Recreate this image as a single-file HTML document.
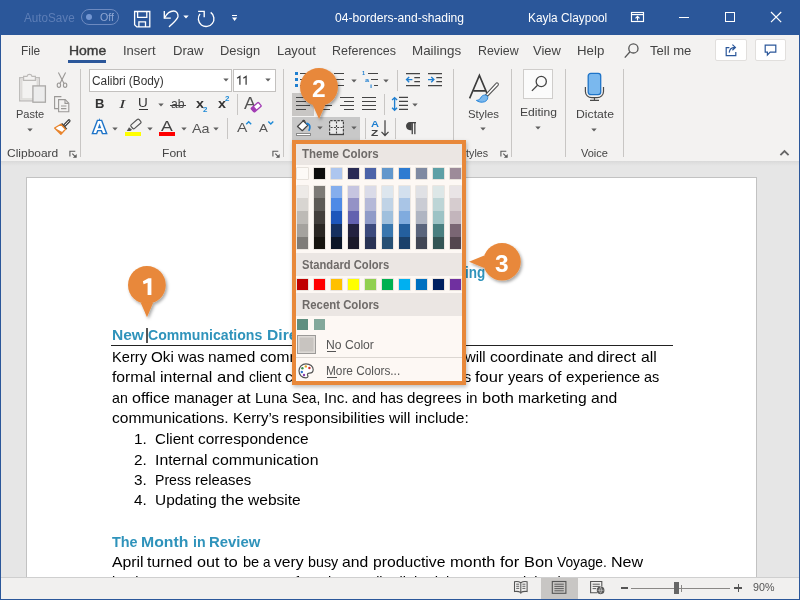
<!DOCTYPE html>
<html><head><meta charset="utf-8"><title>Word</title>
<style>
*{box-sizing:border-box;margin:0;padding:0}
html,body{width:800px;height:600px;overflow:hidden;background:#e6e6e6;font-family:"Liberation Sans",sans-serif;}
.a{position:absolute}
.t{position:absolute;white-space:nowrap;line-height:1;transform-origin:0 0}
</style></head><body>
<div class="a" style="left:0px;top:0px;width:800px;height:35px;background:#2b579a;"></div>
<div class="a" style="left:0px;top:35px;width:800px;height:126px;background:#f3f2f1;"></div>
<div class="a" style="left:0px;top:161px;width:800px;height:5px;background:linear-gradient(#d9d9d9,#e0e0e0 50%,#e6e6e6);"></div>
<div class="a" style="left:26px;top:177px;width:731px;height:410px;background:#fff;border:1px solid #c2c2c2;"></div>
<div class="t" style="left:465.04px;top:265.00px;font-size:16.00px;color:#2f93bb;font-weight:bold;transform:scaleX(0.8436);">ing</div>
<div class="t" style="left:111.70px;top:327.00px;font-size:15.00px;color:#2f93bb;font-weight:bold;transform:scaleX(1.0359);">New</div>
<div class="a" style="left:146.3px;top:327.5px;width:1.3px;height:15.5px;background:#555;"></div>
<div class="t" style="left:148.30px;top:327.00px;font-size:15.00px;color:#2f93bb;font-weight:bold;transform:scaleX(0.9393);white-space:pre;">Communications </div>
<div class="t" style="left:266.50px;top:327.00px;font-size:15.00px;color:#2f93bb;font-weight:bold;transform:scaleX(1.0423);white-space:pre;">Director</div>
<div class="a" style="left:111px;top:344.5px;width:561.5px;height:1.2px;background:#222;"></div>
<div class="t" style="left:111.90px;top:349.00px;font-size:15.00px;color:#000;transform:scaleX(0.9749);white-space:pre;">Kerry </div>
<div class="t" style="left:150.90px;top:349.00px;font-size:15.00px;color:#000;transform:scaleX(1.0125);white-space:pre;">Oki </div>
<div class="t" style="left:177.90px;top:349.00px;font-size:15.00px;color:#000;transform:scaleX(0.9857);white-space:pre;">was </div>
<div class="t" style="left:208.30px;top:349.00px;font-size:15.00px;color:#000;transform:scaleX(1.0313);white-space:pre;">named </div>
<div class="t" style="left:259.90px;top:349.00px;font-size:15.00px;color:#000;transform:scaleX(1.0385);white-space:pre;">communications</div>
<div class="t" style="left:465.10px;top:349.00px;font-size:15.00px;color:#000;transform:scaleX(0.9921);white-space:pre;">will </div>
<div class="t" style="left:489.90px;top:349.00px;font-size:15.00px;color:#000;transform:scaleX(1.0483);white-space:pre;">coordinate </div>
<div class="t" style="left:567.70px;top:349.00px;font-size:15.00px;color:#000;transform:scaleX(1.0173);white-space:pre;">and </div>
<div class="t" style="left:597.40px;top:349.00px;font-size:15.00px;color:#000;transform:scaleX(1.0576);white-space:pre;">direct </div>
<div class="t" style="left:640.60px;top:349.00px;font-size:15.00px;color:#000;transform:scaleX(1.0495);white-space:pre;">all</div>
<div class="t" style="left:111.90px;top:369.00px;font-size:15.00px;color:#000;transform:scaleX(1.0471);white-space:pre;">formal </div>
<div class="t" style="left:159.90px;top:369.00px;font-size:15.00px;color:#000;transform:scaleX(1.0625);white-space:pre;">internal </div>
<div class="t" style="left:216.60px;top:369.00px;font-size:15.00px;color:#000;transform:scaleX(1.1132);white-space:pre;">and </div>
<div class="t" style="left:249.10px;top:369.00px;font-size:15.00px;color:#000;transform:scaleX(0.9238);white-space:pre;">client </div>
<div class="t" style="left:285.30px;top:369.00px;font-size:15.00px;color:#000;transform:scaleX(1.0539);white-space:pre;">communications. </div>
<div class="t" style="left:408.30px;top:369.00px;font-size:15.00px;color:#000;transform:scaleX(1.0366);white-space:pre;">Kerry</div>
<div class="t" style="left:447.80px;top:369.00px;font-size:15.00px;color:#000;transform:scaleX(0.9629);white-space:pre;">has </div>
<div class="t" style="left:475.10px;top:369.00px;font-size:15.00px;color:#000;transform:scaleX(1.0995);white-space:pre;">four </div>
<div class="t" style="left:508.10px;top:369.00px;font-size:15.00px;color:#000;transform:scaleX(0.9695);white-space:pre;">years </div>
<div class="t" style="left:547.70px;top:369.00px;font-size:15.00px;color:#000;transform:scaleX(1.0673);white-space:pre;">of </div>
<div class="t" style="left:565.50px;top:369.00px;font-size:15.00px;color:#000;transform:scaleX(1.0110);white-space:pre;">experience </div>
<div class="t" style="left:643.90px;top:369.00px;font-size:15.00px;color:#000;transform:scaleX(0.9626);white-space:pre;">as</div>
<div class="t" style="left:111.90px;top:390.00px;font-size:15.00px;color:#000;transform:scaleX(0.9447);white-space:pre;">an </div>
<div class="t" style="left:131.60px;top:390.00px;font-size:15.00px;color:#000;transform:scaleX(1.0692);white-space:pre;">office </div>
<div class="t" style="left:174.10px;top:390.00px;font-size:15.00px;color:#000;transform:scaleX(0.9942);white-space:pre;">manager </div>
<div class="t" style="left:237.10px;top:390.00px;font-size:15.00px;color:#000;transform:scaleX(1.0913);white-space:pre;">at </div>
<div class="t" style="left:255.30px;top:390.00px;font-size:15.00px;color:#000;transform:scaleX(0.9671);white-space:pre;">Luna </div>
<div class="t" style="left:291.60px;top:390.00px;font-size:15.00px;color:#000;transform:scaleX(0.9136);white-space:pre;">Sea, </div>
<div class="t" style="left:323.60px;top:390.00px;font-size:15.00px;color:#000;transform:scaleX(1.0125);white-space:pre;">Inc. </div>
<div class="t" style="left:352.30px;top:390.00px;font-size:15.00px;color:#000;transform:scaleX(0.9591);white-space:pre;">and </div>
<div class="t" style="left:380.30px;top:390.00px;font-size:15.00px;color:#000;transform:scaleX(0.9523);white-space:pre;">has </div>
<div class="t" style="left:407.30px;top:390.00px;font-size:15.00px;color:#000;transform:scaleX(1.0073);white-space:pre;">degrees </div>
<div class="t" style="left:466.10px;top:390.00px;font-size:15.00px;color:#000;transform:scaleX(0.9784);white-space:pre;">in </div>
<div class="t" style="left:481.60px;top:390.00px;font-size:15.00px;color:#000;transform:scaleX(1.0941);white-space:pre;">both </div>
<div class="t" style="left:518.10px;top:390.00px;font-size:15.00px;color:#000;transform:scaleX(1.0425);white-space:pre;">marketing </div>
<div class="t" style="left:591.10px;top:390.00px;font-size:15.00px;color:#000;transform:scaleX(1.0489);white-space:pre;">and</div>
<div class="t" style="left:111.90px;top:410.00px;font-size:15.00px;color:#000;transform:scaleX(1.0367);white-space:pre;">communications. </div>
<div class="t" style="left:232.90px;top:410.00px;font-size:15.00px;color:#000;transform:scaleX(0.9888);white-space:pre;">Kerry’s </div>
<div class="t" style="left:282.90px;top:410.00px;font-size:15.00px;color:#000;transform:scaleX(1.0356);white-space:pre;">responsibilities </div>
<div class="t" style="left:389.10px;top:410.00px;font-size:15.00px;color:#000;transform:scaleX(1.0321);white-space:pre;">will </div>
<div class="t" style="left:414.90px;top:410.00px;font-size:15.00px;color:#000;transform:scaleX(1.0396);white-space:pre;">include:</div>
<div class="t" style="left:133.50px;top:431.00px;font-size:15.00px;color:#000;transform:scaleX(1.0192);">1.</div>
<div class="t" style="left:154.60px;top:431.00px;font-size:15.00px;color:#000;transform:scaleX(1.0090);white-space:pre;">Client </div>
<div class="t" style="left:197.50px;top:431.00px;font-size:15.00px;color:#000;transform:scaleX(1.0286);white-space:pre;">correspondence</div>
<div class="t" style="left:133.50px;top:452.00px;font-size:15.00px;color:#000;transform:scaleX(1.0192);">2.</div>
<div class="t" style="left:154.60px;top:452.00px;font-size:15.00px;color:#000;transform:scaleX(1.0517);white-space:pre;">Internal </div>
<div class="t" style="left:211.60px;top:452.00px;font-size:15.00px;color:#000;transform:scaleX(1.0552);white-space:pre;">communication</div>
<div class="t" style="left:133.50px;top:472.00px;font-size:15.00px;color:#000;transform:scaleX(1.0192);">3.</div>
<div class="t" style="left:154.60px;top:472.00px;font-size:15.00px;color:#000;transform:scaleX(0.9386);white-space:pre;">Press </div>
<div class="t" style="left:194.50px;top:472.00px;font-size:15.00px;color:#000;transform:scaleX(0.9886);white-space:pre;">releases</div>
<div class="t" style="left:133.50px;top:492.00px;font-size:15.00px;color:#000;transform:scaleX(1.0192);">4.</div>
<div class="t" style="left:154.60px;top:492.00px;font-size:15.00px;color:#000;transform:scaleX(1.0278);white-space:pre;">Updating </div>
<div class="t" style="left:220.60px;top:492.00px;font-size:15.00px;color:#000;transform:scaleX(1.1031);white-space:pre;">the </div>
<div class="t" style="left:248.20px;top:492.00px;font-size:15.00px;color:#000;transform:scaleX(1.0372);white-space:pre;">website</div>
<div class="t" style="left:111.50px;top:534.00px;font-size:15.00px;color:#2f93bb;font-weight:bold;transform:scaleX(0.9599);white-space:pre;">The </div>
<div class="t" style="left:141.10px;top:534.00px;font-size:15.00px;color:#2f93bb;font-weight:bold;transform:scaleX(1.0540);white-space:pre;">Month </div>
<div class="t" style="left:192.90px;top:534.00px;font-size:15.00px;color:#2f93bb;font-weight:bold;transform:scaleX(0.9430);white-space:pre;">in </div>
<div class="t" style="left:209.40px;top:534.00px;font-size:15.00px;color:#2f93bb;font-weight:bold;transform:scaleX(0.9933);white-space:pre;">Review</div>
<div class="t" style="left:111.50px;top:554.00px;font-size:15.00px;color:#000;transform:scaleX(1.0505);white-space:pre;">April </div>
<div class="t" style="left:147.40px;top:554.00px;font-size:15.00px;color:#000;transform:scaleX(1.0643);white-space:pre;">turned </div>
<div class="t" style="left:197.10px;top:554.00px;font-size:15.00px;color:#000;transform:scaleX(1.0792);white-space:pre;">out </div>
<div class="t" style="left:224.10px;top:554.00px;font-size:15.00px;color:#000;transform:scaleX(1.1093);white-space:pre;">to </div>
<div class="t" style="left:242.60px;top:554.00px;font-size:15.00px;color:#000;transform:scaleX(0.9735);white-space:pre;">be </div>
<div class="t" style="left:262.90px;top:554.00px;font-size:15.00px;color:#000;transform:scaleX(0.8953);white-space:pre;">a </div>
<div class="t" style="left:274.10px;top:554.00px;font-size:15.00px;color:#000;transform:scaleX(1.0460);white-space:pre;">very </div>
<div class="t" style="left:308.10px;top:554.00px;font-size:15.00px;color:#000;transform:scaleX(0.9539);white-space:pre;">busy </div>
<div class="t" style="left:342.30px;top:554.00px;font-size:15.00px;color:#000;transform:scaleX(1.0481);white-space:pre;">and </div>
<div class="t" style="left:372.90px;top:554.00px;font-size:15.00px;color:#000;transform:scaleX(1.0467);white-space:pre;">productive </div>
<div class="t" style="left:449.70px;top:554.00px;font-size:15.00px;color:#000;transform:scaleX(1.0882);white-space:pre;">month </div>
<div class="t" style="left:499.60px;top:554.00px;font-size:15.00px;color:#000;transform:scaleX(1.1074);white-space:pre;">for </div>
<div class="t" style="left:523.60px;top:554.00px;font-size:15.00px;color:#000;transform:scaleX(1.0921);white-space:pre;">Bon </div>
<div class="t" style="left:557.30px;top:554.00px;font-size:15.00px;color:#000;transform:scaleX(0.9198);white-space:pre;">Voyage. </div>
<div class="t" style="left:611.00px;top:554.00px;font-size:15.00px;color:#000;transform:scaleX(1.0714);white-space:pre;">New</div>
<div class="t" style="left:111.50px;top:574.00px;font-size:15.00px;color:#000;transform:scaleX(0.9630);">business was up 34 percent from last April. Flight delays were minimal—Bon</div>
<div class="a" style="left:0px;top:576.6px;width:800px;height:23.4px;background:#f1f0ef;border-top:1px solid #cfcfcf;"></div>
<div class="a" style="left:0px;top:598.7px;width:800px;height:1.3px;background:#2b579a;"></div>
<svg class="a" style="left:513px;top:580px;" width="16" height="15" viewBox="0 0 16 15"><g fill="none" stroke="#555" stroke-width="1.050"><path d="M7.800 2.700C6 1.500 3.600 1.300 1.500 1.700v9.900c2.100-.4 4.500-.2 6.300 1c1.800-1.200 4.200-1.400 6.300-1V1.700c-2.100-.4-4.500-.2-6.300 1zM7.800 2.700v11"/><path d="M3.200 4.200h3M3.200 6.300h3M3.200 8.400h3M9.400 4.200h3M9.400 6.300h3M9.400 8.400h3" stroke-width=".9"/></g></svg>
<div class="a" style="left:540.5px;top:577.6px;width:37.5px;height:21.1px;background:#c8c6c4;"></div>
<svg class="a" style="left:551px;top:580px;" width="17" height="15" viewBox="0 0 17 15"><g fill="none" stroke="#555" stroke-width="1.100"><rect x="1.300" y="1.500" width="13.600" height="11.800"/><path d="M3.400 4.200h9.400M3.400 6.400h9.400M3.400 8.600h9.400M3.400 10.800h9.400" stroke-width=".95"/></g></svg>
<svg class="a" style="left:589px;top:580px;" width="17" height="15" viewBox="0 0 17 15"><g fill="none" stroke="#555" stroke-width="1.100"><path d="M8 12.700H1.600V1.500h11.200v5"/><path d="M3.600 4.200h7.200M3.600 6.400h7.200M3.600 8.600h3.600" stroke-width=".95"/><circle cx="11.600" cy="10.300" r="3.300" fill="#5a5a5a"/><path d="M8.600 10.300h6M11.600 7.300c-1.300 1.700-1.300 4.300 0 6c1.300-1.700 1.300-4.300 0-6" stroke="#d8d8d8" stroke-width=".6"/></g></svg>
<div class="a" style="left:620.5px;top:587.4px;width:7px;height:1.3px;background:#555;"></div>
<div class="a" style="left:631px;top:587.6px;width:99px;height:1px;background:#8a8886;"></div>
<div class="a" style="left:681.2px;top:584.6px;width:1px;height:7px;background:#8a8886;"></div>
<div class="a" style="left:674.4px;top:581.6px;width:4.6px;height:12px;background:#666;"></div>
<div class="a" style="left:734.4px;top:587.4px;width:8px;height:1.3px;background:#555;"></div>
<div class="a" style="left:737.8px;top:584px;width:1.3px;height:8px;background:#555;"></div>
<div class="t" style="left:753.36px;top:582.00px;font-size:10.60px;color:#555;transform:scaleX(1.0112);">90%</div>
<div class="a" style="left:0px;top:35px;width:1.1px;height:565px;background:#2b579a;"></div>
<div class="a" style="left:798.8px;top:35px;width:1.2px;height:565px;background:#2b579a;"></div>
<div class="t" style="left:24.05px;top:12.00px;font-size:12.50px;color:#5d7eb7;transform:scaleX(0.9339);">AutoSave</div>
<div class="a" style="left:80.8px;top:9.1px;width:38px;height:15.8px;background:transparent;border:1.100px solid #6d8ac0;border-radius:8px;"></div>
<div class="a" style="left:85.5px;top:13.7px;width:6.6px;height:6.6px;background:#7396d2;border-radius:3.300px;"></div>
<div class="t" style="left:99.57px;top:12.00px;font-size:10.50px;color:#8ea6d2;transform:scaleX(1.0169);">Off</div>
<svg class="a" style="left:133px;top:10px;" width="19" height="19" viewBox="0 0 19 19"><g fill="none" stroke="#fff" stroke-width="1.3"><path d="M1.600 1.500h15.200v15.400H3.800l-2.200-2.200z"/><path d="M4.600 1.500v5.800h9.200V1.500"/><path d="M5.900 16.900v-5h6.600v5"/></g></svg>
<svg class="a" style="left:160px;top:6px;" width="22" height="24" viewBox="0 0 22 24"><g fill="none" stroke="#fff" stroke-width="1.35"><path d="M4.300 5v7.100h6.500"/><path d="M4.700 11.700C6.600 8 10 5 13.600 5c2.900 0 4.600 2.500 4.400 5.400c-.4 3.100-4 5.600-8.600 10.100" stroke-linecap="round"/></g></svg>
<svg class="a" style="left:181.5px;top:14.3px;" width="8" height="6" viewBox="0 0 8 6"><path d="M1.300 1.500h5.400L4 4.600z" fill="#fff"/></svg>
<svg class="a" style="left:195px;top:6px;" width="22" height="24" viewBox="0 0 22 24"><g fill="none" stroke="#fff" stroke-width="1.35"><path d="M3.100 5.300h6.100v6"/><path d="M15.700 6.400A7.800 7.800 0 1 1 5 7.900"/></g></svg>
<div class="a" style="left:232px;top:15px;width:5.2px;height:1.2px;background:#fff;"></div>
<svg class="a" style="left:231px;top:17px;" width="8" height="5" viewBox="0 0 8 5"><path d="M1 .5h5.200L3.600 3.900z" fill="#fff"/></svg>
<div class="t" style="left:334.85px;top:12.00px;font-size:12.50px;color:#fff;transform:scaleX(0.9671);">04-borders-and-shading</div>
<div class="t" style="left:527.65px;top:12.00px;font-size:12.50px;color:#fff;transform:scaleX(0.9502);">Kayla Claypool</div>
<svg class="a" style="left:630px;top:11px;" width="15" height="12" viewBox="0 0 15 12"><g fill="none" stroke="#fff" stroke-width="1.150"><rect x="1.500" y="1.500" width="12" height="9"/><path d="M1.500 3.600h12"/><path d="M7.500 9.400V5.600M5.500 7.300l2-1.900l2 1.900"/></g></svg>
<div class="a" style="left:679px;top:16.5px;width:10.2px;height:1.1px;background:#fff;"></div>
<div class="a" style="left:725.1px;top:12.3px;width:10.3px;height:9.9px;background:transparent;border:1.200px solid #fff;"></div>
<svg class="a" style="left:770px;top:11.4px;" width="12" height="12" viewBox="0 0 12 12"><path d="M1 1l10.200 10.200M11.200 1L1 11.200" stroke="#fff" stroke-width="1.200" fill="none"/></svg>
<div class="t" style="left:21.02px;top:44.00px;font-size:13.00px;color:#444;transform:scaleX(0.9151);">File</div>
<div class="t" style="left:69.02px;top:44.00px;font-size:13.00px;color:#3b3b3b;transform:scaleX(1.0748);-webkit-text-stroke:0.38px #3b3b3b;">Home</div>
<div class="a" style="left:68px;top:59.9px;width:38px;height:2.8px;background:#2b579a;"></div>
<div class="t" style="left:122.82px;top:44.00px;font-size:13.00px;color:#444;transform:scaleX(1.0018);">Insert</div>
<div class="t" style="left:172.82px;top:44.00px;font-size:13.00px;color:#444;transform:scaleX(1.0077);">Draw</div>
<div class="t" style="left:219.82px;top:44.00px;font-size:13.00px;color:#444;transform:scaleX(0.9927);">Design</div>
<div class="t" style="left:276.62px;top:44.00px;font-size:13.00px;color:#444;transform:scaleX(0.9933);">Layout</div>
<div class="t" style="left:331.82px;top:44.00px;font-size:13.00px;color:#444;transform:scaleX(0.9623);">References</div>
<div class="t" style="left:411.82px;top:44.00px;font-size:13.00px;color:#444;transform:scaleX(1.0312);">Mailings</div>
<div class="t" style="left:477.82px;top:44.00px;font-size:13.00px;color:#444;transform:scaleX(0.9518);">Review</div>
<div class="t" style="left:533.22px;top:44.00px;font-size:13.00px;color:#444;transform:scaleX(0.9938);">View</div>
<div class="t" style="left:576.62px;top:44.00px;font-size:13.00px;color:#444;transform:scaleX(1.0200);">Help</div>
<svg class="a" style="left:622px;top:41px;" width="18" height="18" viewBox="0 0 18 18"><g fill="none" stroke="#555" stroke-width="1.3"><circle cx="11.4" cy="7.4" r="4.6"/><path d="M8 10.800L2.800 16.600"/></g></svg>
<div class="t" style="left:650.12px;top:44.00px;font-size:13.00px;color:#444;transform:scaleX(1.0047);">Tell me</div>
<div class="a" style="left:715.4px;top:38.8px;width:31.2px;height:22.6px;background:#fff;border:1px solid #e1dfdd;border-radius:2px;"></div>
<div class="a" style="left:755.2px;top:38.8px;width:31.2px;height:22.6px;background:#fff;border:1px solid #e1dfdd;border-radius:2px;"></div>
<svg class="a" style="left:722.6px;top:42.3px;" width="17" height="16" viewBox="0 0 17 16"><g fill="none" stroke="#2b579a" stroke-width="1.2"><path d="M6.4 5.6H3.2v8h9.6v-3.6"/><path d="M6.2 10.6c.4-3.2 2.4-5 5.4-5.200M9.4 2.600l3 2.800l-3 2.800"/></g></svg>
<svg class="a" style="left:762.3px;top:42.3px;" width="17" height="16" viewBox="0 0 17 16"><path d="M3.200 3.200h10.600v7H8.200l-2.800 2.800v-2.800H3.200z" fill="none" stroke="#2b579a" stroke-width="1.2"/></svg>
<svg class="a" style="left:17px;top:70px;" width="32" height="36" viewBox="0 0 32 36"><g fill="none"><rect x="2.7" y="7.7" width="19.6" height="23.2" stroke="#bcbab8" stroke-width="1.3" fill="#f3f2f1"/><rect x="4.6" y="9.6" width="15.8" height="19.4" stroke="#dddbd9" stroke-width="1.6"/><path d="M6.6 10.300V6.300h3.400a2.600 2.600 0 0 1 5 0h3.400v4z" fill="#f3f2f1" stroke="#bcbab8" stroke-width="1.2"/><rect x="15.9" y="15.9" width="12.500" height="16.300" fill="#ececec" stroke="#aaa8a6" stroke-width="1.3"/></g></svg>
<div class="t" style="left:15.90px;top:108.00px;font-size:11.60px;color:#444;transform:scaleX(0.9522);">Paste</div>
<svg class="a" style="left:25.5px;top:126.5px;" width="8" height="6" viewBox="0 0 8 6"><path d="M1.3 1.5h5.4L4 4.5z" fill="#606060"/></svg>
<svg class="a" style="left:55px;top:71px;" width="14" height="18" viewBox="0 0 14 18"><g fill="none" stroke="#9a9896" stroke-width="1.1"><path d="M3.4 1.4l5.6 11"/><path d="M10.6 1.4L5 12.4"/><ellipse cx="3.9" cy="14.2" rx="1.7" ry="2.2"/><ellipse cx="10.1" cy="14.2" rx="1.7" ry="2.2"/></g></svg>
<svg class="a" style="left:53px;top:95px;" width="18" height="18" viewBox="0 0 18 18"><g fill="none" stroke="#9a9896" stroke-width="1.1"><path d="M5 13.6H1.6V1.6h6.8"/><path d="M5.6 4.6h6.6l3.6 3.6v8.6H5.6z" fill="#f3f2f1"/><path d="M12 4.8v3.6h3.6"/><path d="M8 11h5.4M8 13.6h5.4"/></g></svg>
<svg class="a" style="left:53px;top:118px;" width="19" height="18" viewBox="0 0 19 18"><g stroke-linejoin="round"><path d="M11.6 7.4L16 2.800" stroke="#444" stroke-width="3.200" stroke-linecap="round" fill="none"/><path d="M11.800 7.200L15.800 3" stroke="#f3f2f1" stroke-width="1" stroke-linecap="round" fill="none"/><path d="M8.4 5.600l5 5.800" stroke="#444" stroke-width="2.200" fill="none"/><path d="M7.900 6.200L1.600 10l6.300 6.200l4.600-5z" fill="#fff" stroke="#e8842c" stroke-width="1.3"/><path d="M1.600 10l6.300 6.200l1.800-2z" fill="#e8842c"/></g></svg>
<div class="t" style="left:6.85px;top:148.00px;font-size:10.80px;color:#444;transform:scaleX(1.1091);">Clipboard</div>
<svg class="a" style="left:69px;top:150px;" width="9" height="9" viewBox="0 0 9 9"><g fill="none" stroke="#5a5a5a" stroke-width="1.1"><path d="M0.900 6.400V1.200H6.300"/><path d="M3.300 3.600l3.200 3.200"/><path d="M7.700 3.900v3.900H3.800z" fill="#5a5a5a" stroke="none"/></g></svg>
<div class="a" style="left:80px;top:69.3px;width:1px;height:87.7px;background:#c8c6c4;"></div>
<div class="a" style="left:88.9px;top:69.2px;width:143.6px;height:22.4px;background:#fff;border:1.300px solid #c3c1bf;"></div>
<div class="a" style="left:232.9px;top:69.2px;width:43px;height:22.4px;background:#fff;border:1.300px solid #c3c1bf;"></div>
<div class="t" style="left:92.25px;top:75.00px;font-size:12.50px;color:#333;transform:scaleX(0.9473);">Calibri (Body)</div>
<svg class="a" style="left:221.5px;top:77.4px;" width="8" height="6" viewBox="0 0 8 6"><path d="M1.3 1.5h5.4L4 4.5z" fill="#606060"/></svg>
<svg class="a" style="left:235px;top:75px;" width="14" height="11" viewBox="0 0 14 11"><g fill="none" stroke="#3a3a3a" stroke-width="1.250"><path d="M2.100 3.300L4.900 1.500V9.700"/><path d="M8.300 3.300l2.800-1.800V9.700"/></g></svg>
<svg class="a" style="left:264.4px;top:77.4px;" width="8" height="6" viewBox="0 0 8 6"><path d="M1.3 1.5h5.4L4 4.5z" fill="#606060"/></svg>
<div class="t" style="left:95.41px;top:97.00px;font-size:13.10px;color:#333;font-weight:bold;transform:scaleX(0.9914);">B</div>
<div class="t" style="left:118.80px;top:97.00px;font-size:13.40px;color:#333;font-style:italic;font-family:'Liberation Serif',serif;transform:scaleX(1.4355);">I</div>
<div class="t" style="left:138.44px;top:97.00px;font-size:12.60px;color:#333;transform:scaleX(1.0697);">U</div>
<div class="a" style="left:139.1px;top:108.7px;width:9px;height:1.2px;background:#333;"></div>
<svg class="a" style="left:156.5px;top:101.5px;" width="8" height="6" viewBox="0 0 8 6"><path d="M1.3 1.5h5.4L4 4.5z" fill="#606060"/></svg>
<div class="t" style="left:171.23px;top:98.00px;font-size:12.80px;color:#444;transform:scaleX(0.9518);">ab</div>
<div class="a" style="left:170px;top:104.5px;width:16.2px;height:1px;background:#444;"></div>
<div class="t" style="left:195.61px;top:97.00px;font-size:13.20px;color:#333;font-weight:bold;transform:scaleX(1.0881);">x</div>
<div class="t" style="left:203.28px;top:106.00px;font-size:7.00px;color:#1e8ad6;font-weight:bold;transform:scaleX(1.1379);">2</div>
<div class="t" style="left:217.71px;top:97.00px;font-size:13.20px;color:#333;font-weight:bold;transform:scaleX(1.0881);">x</div>
<div class="t" style="left:225.38px;top:95.00px;font-size:7.00px;color:#1e8ad6;font-weight:bold;transform:scaleX(1.1379);">2</div>
<div class="a" style="left:237.2px;top:94px;width:1px;height:20.8px;background:#c8c6c4;"></div>
<div class="t" style="left:243.59px;top:96.00px;font-size:16.90px;color:#555;transform:scaleX(1.0753);">A</div>
<svg class="a" style="left:249px;top:100px;" width="14" height="14" viewBox="0 0 14 14"><g transform="rotate(-41 7.2 7.2)"><rect x="2.4" y="4.7" width="9.6" height="5" rx=".8" fill="#fff" stroke="#a23cb4" stroke-width="1.3"/><rect x="2.4" y="4.7" width="3.6" height="5" fill="#a23cb4"/></g></svg>
<div class="t" style="left:92.80px;top:120.00px;font-size:16.60px;color:#fff;font-weight:bold;transform:scaleX(1.0923);-webkit-text-stroke:2.7px #1e74c8;paint-order:stroke fill;">A</div>
<svg class="a" style="left:110.6px;top:125.5px;" width="8" height="6" viewBox="0 0 8 6"><path d="M1.3 1.5h5.4L4 4.5z" fill="#606060"/></svg>
<svg class="a" style="left:124px;top:118px;" width="19" height="15" viewBox="0 0 19 15"><g><rect x="-4.6" y="-2.5" width="10.6" height="5" rx="1.4" transform="translate(11.4 6.4) rotate(-41)" fill="#f3f2f1" stroke="#555" stroke-width="1.15"/><path d="M2.8 13l2.2-3.8l3 2.6l-1.6 1.2z" fill="#555"/></g></svg>
<div class="a" style="left:125px;top:132px;width:16px;height:4px;background:#ffff00;"></div>
<svg class="a" style="left:145.5px;top:125.5px;" width="8" height="6" viewBox="0 0 8 6"><path d="M1.3 1.5h5.4L4 4.5z" fill="#606060"/></svg>
<div class="t" style="left:161.24px;top:119.00px;font-size:14.30px;color:#444;transform:scaleX(1.2358);">A</div>
<div class="a" style="left:159.1px;top:132px;width:16px;height:4px;background:#ff0000;"></div>
<svg class="a" style="left:179.5px;top:125.5px;" width="8" height="6" viewBox="0 0 8 6"><path d="M1.3 1.5h5.4L4 4.5z" fill="#606060"/></svg>
<div class="t" style="left:192.21px;top:122.00px;font-size:13.20px;color:#555;transform:scaleX(1.0893);">Aa</div>
<svg class="a" style="left:211.6px;top:125.5px;" width="8" height="6" viewBox="0 0 8 6"><path d="M1.3 1.5h5.4L4 4.5z" fill="#606060"/></svg>
<div class="a" style="left:227.2px;top:118.2px;width:1px;height:20.4px;background:#c8c6c4;"></div>
<div class="t" style="left:237.21px;top:121.00px;font-size:13.10px;color:#555;transform:scaleX(1.1878);">A</div>
<svg class="a" style="left:245px;top:119.6px;" width="8" height="6" viewBox="0 0 8 6"><path d="M1.2 4.2L3.7 1.7L6.2 4.2" fill="none" stroke="#1e8ad6" stroke-width="1.4"/></svg>
<div class="t" style="left:259.14px;top:123.00px;font-size:11.00px;color:#555;transform:scaleX(1.2117);">A</div>
<svg class="a" style="left:266.7px;top:120px;" width="8" height="6" viewBox="0 0 8 6"><path d="M1.3 1.5L3.8 4L6.3 1.5" fill="none" stroke="#1e8ad6" stroke-width="1.4"/></svg>
<div class="t" style="left:162.15px;top:148.00px;font-size:10.80px;color:#444;transform:scaleX(1.1185);">Font</div>
<svg class="a" style="left:272px;top:150px;" width="9" height="9" viewBox="0 0 9 9"><g fill="none" stroke="#5a5a5a" stroke-width="1.1"><path d="M0.900 6.400V1.200H6.300"/><path d="M3.300 3.600l3.200 3.200"/><path d="M7.700 3.900v3.900H3.800z" fill="#5a5a5a" stroke="none"/></g></svg>
<div class="a" style="left:283.2px;top:69.3px;width:1px;height:87.7px;background:#c8c6c4;"></div>
<div class="a" style="left:295px;top:72.1px;width:2.9px;height:2.8px;background:#1f7fd0;"></div>
<div class="a" style="left:299.8px;top:72.9px;width:12px;height:1.25px;background:#444;"></div>
<div class="a" style="left:295px;top:78.15px;width:2.9px;height:2.8px;background:#1f7fd0;"></div>
<div class="a" style="left:299.8px;top:78.95px;width:12px;height:1.25px;background:#444;"></div>
<div class="a" style="left:295px;top:84.2px;width:2.9px;height:2.8px;background:#1f7fd0;"></div>
<div class="a" style="left:299.8px;top:85px;width:12px;height:1.25px;background:#444;"></div>
<svg class="a" style="left:315px;top:77.5px;" width="8" height="6" viewBox="0 0 8 6"><path d="M1.3 1.5h5.4L4 4.5z" fill="#606060"/></svg>
<div class="t" style="left:328.48px;top:72.00px;font-size:5.40px;color:#1f7fd0;font-weight:bold;transform:scaleX(1.0942);">1</div>
<div class="a" style="left:333.8px;top:72.9px;width:10.4px;height:1.25px;background:#444;"></div>
<div class="t" style="left:328.48px;top:78.00px;font-size:5.40px;color:#1f7fd0;font-weight:bold;transform:scaleX(1.0942);">2</div>
<div class="a" style="left:333.8px;top:78.95px;width:10.4px;height:1.25px;background:#444;"></div>
<div class="t" style="left:328.48px;top:84.00px;font-size:5.40px;color:#1f7fd0;font-weight:bold;transform:scaleX(1.0942);">3</div>
<div class="a" style="left:333.8px;top:85px;width:10.4px;height:1.25px;background:#444;"></div>
<svg class="a" style="left:349.6px;top:77.5px;" width="8" height="6" viewBox="0 0 8 6"><path d="M1.3 1.5h5.4L4 4.5z" fill="#606060"/></svg>
<div class="t" style="left:362.48px;top:71.00px;font-size:5.40px;color:#1f7fd0;font-weight:bold;transform:scaleX(1.0276);">1</div>
<div class="a" style="left:368.3px;top:73.1px;width:9.8px;height:1.25px;background:#444;"></div>
<div class="t" style="left:365.25px;top:78.00px;font-size:5.80px;color:#1f7fd0;font-weight:bold;transform:scaleX(1.2779);">a</div>
<div class="a" style="left:371.3px;top:79px;width:6.8px;height:1.25px;background:#444;"></div>
<div class="t" style="left:370.05px;top:84.00px;font-size:5.80px;color:#1f7fd0;font-weight:bold;transform:scaleX(1.3169);">i</div>
<div class="a" style="left:374px;top:85.1px;width:4.1px;height:1.25px;background:#444;"></div>
<svg class="a" style="left:381.5px;top:77.5px;" width="8" height="6" viewBox="0 0 8 6"><path d="M1.3 1.5h5.4L4 4.5z" fill="#606060"/></svg>
<div class="a" style="left:397.4px;top:70.3px;width:1px;height:20.4px;background:#c8c6c4;"></div>
<svg class="a" style="left:404px;top:70px;" width="18" height="18" viewBox="0 0 18 18"><g fill="none" stroke-width="1.25"><path d="M2 3.7h14M10.3 7.7h5.7M10.3 11.7h5.7M2 15.7h14" stroke="#444"/><path d="M2.6 9.6h5.8M5.2 6.9L2.5 9.6l2.7 2.7" stroke="#1f7fd0" stroke-width="1.35"/></g></svg>
<svg class="a" style="left:426px;top:70px;" width="18" height="18" viewBox="0 0 18 18"><g fill="none" stroke-width="1.25"><path d="M2 3.7h14M10.3 7.7h5.7M10.3 11.7h5.7M2 15.7h14" stroke="#444"/><path d="M2 9.6h5.8M5.2 6.9l2.7 2.7l-2.7 2.7" stroke="#1f7fd0" stroke-width="1.35"/></g></svg>
<div class="a" style="left:292.2px;top:93px;width:21.6px;height:22.6px;background:#c8c6c4;"></div>
<div class="a" style="left:295.9px;top:96.7px;width:14.1px;height:1.25px;background:#444;"></div>
<div class="a" style="left:318px;top:96.7px;width:14px;height:1.25px;background:#444;"></div>
<div class="a" style="left:340px;top:96.7px;width:14px;height:1.25px;background:#444;"></div>
<div class="a" style="left:362px;top:96.7px;width:14px;height:1.25px;background:#444;"></div>
<div class="a" style="left:295.9px;top:100.7px;width:9.7px;height:1.25px;background:#444;"></div>
<div class="a" style="left:320.5px;top:100.7px;width:9px;height:1.25px;background:#444;"></div>
<div class="a" style="left:344.1px;top:100.7px;width:9.9px;height:1.25px;background:#444;"></div>
<div class="a" style="left:362px;top:100.7px;width:14px;height:1.25px;background:#444;"></div>
<div class="a" style="left:295.9px;top:104.7px;width:14.1px;height:1.25px;background:#444;"></div>
<div class="a" style="left:318px;top:104.7px;width:14px;height:1.25px;background:#444;"></div>
<div class="a" style="left:340px;top:104.7px;width:14px;height:1.25px;background:#444;"></div>
<div class="a" style="left:362px;top:104.7px;width:14px;height:1.25px;background:#444;"></div>
<div class="a" style="left:295.9px;top:108.7px;width:9.7px;height:1.25px;background:#444;"></div>
<div class="a" style="left:320.5px;top:108.7px;width:9px;height:1.25px;background:#444;"></div>
<div class="a" style="left:344.1px;top:108.7px;width:9.9px;height:1.25px;background:#444;"></div>
<div class="a" style="left:362px;top:108.7px;width:14px;height:1.25px;background:#444;"></div>
<div class="a" style="left:384.3px;top:94px;width:1px;height:20.7px;background:#c8c6c4;"></div>
<svg class="a" style="left:390px;top:95px;" width="20" height="18" viewBox="0 0 20 18"><g fill="none" stroke-width="1.25"><path d="M4.6 2.6v12.6M2.1 5.1L4.6 2.6L7.1 5.1M2.1 12.7l2.5 2.5l2.5-2.5" stroke="#1f7fd0" stroke-width="1.35"/><path d="M9 2.3h9M9 6.3h9M9 10.3h9M9 14.3h9" stroke="#444"/></g></svg>
<svg class="a" style="left:410.5px;top:101.5px;" width="8" height="6" viewBox="0 0 8 6"><path d="M1.3 1.5h5.4L4 4.5z" fill="#606060"/></svg>
<div class="a" style="left:292.2px;top:117.2px;width:67.6px;height:22.6px;background:#c8c8c8;"></div>
<svg class="a" style="left:294px;top:118px;" width="18" height="18" viewBox="0 0 18 18"><g stroke-linejoin="round" stroke-linecap="round"><path d="M8.6 3.6c.2-1.4 1.6-1.6 2.2-.6c.4.6.4 1.6.2 2.6" fill="none" stroke="#444" stroke-width="1.1"/><path d="M9.2 2.9l4.6 4.4l-5.5 5.4l-4.8-4.2z" fill="#fff" stroke="#444" stroke-width="1.25"/><path d="M12.9 5.4c1.9.6 3 1.9 3 3.6c0 1.2-.3 2.2-.8 3.2" fill="none" stroke="#1f7fd0" stroke-width="1.7"/></g></svg>
<div class="a" style="left:295.5px;top:132.5px;width:15px;height:3px;background:#fff;border:0.7px solid #8a8a8a;"></div>
<svg class="a" style="left:315.5px;top:125.4px;" width="8" height="6" viewBox="0 0 8 6"><path d="M1.3 1.5h5.4L4 4.5z" fill="#606060"/></svg>
<div class="a" style="left:329.6px;top:120.6px;width:13.8px;height:13.6px;background:#e9e9e9;"></div>
<svg class="a" style="left:328px;top:119px;" width="17" height="17" viewBox="0 0 17 17"><g fill="none" stroke="#444" stroke-width="1.2"><path d="M1.6 15.4V1.6h13.8v13.8" stroke-dasharray="2.4 1.2"/><path d="M8.5 2.6v12M2.6 8.5h12" stroke-dasharray="2 1.3" stroke-width="1.1"/><path d="M1 15.5h15" stroke-width="1.3"/></g></svg>
<svg class="a" style="left:349.5px;top:125.4px;" width="8" height="6" viewBox="0 0 8 6"><path d="M1.3 1.5h5.4L4 4.5z" fill="#606060"/></svg>
<div class="a" style="left:364.6px;top:118px;width:1px;height:20.7px;background:#c8c6c4;"></div>
<div class="t" style="left:371.46px;top:120.00px;font-size:9.00px;color:#1f7fd0;font-weight:bold;transform:scaleX(1.2324);">A</div>
<div class="t" style="left:371.46px;top:129.00px;font-size:9.00px;color:#444;font-weight:bold;transform:scaleX(1.3115);">Z</div>
<svg class="a" style="left:379.6px;top:119px;" width="10" height="18" viewBox="0 0 10 18"><g fill="none" stroke="#444" stroke-width="1.25"><path d="M5 1.3v15M1.5 12.9L5 16.5l3.5-3.6"/></g></svg>
<div class="a" style="left:395.4px;top:118px;width:1px;height:20.7px;background:#c8c6c4;"></div>
<svg class="a" style="left:404px;top:120px;" width="14" height="16" viewBox="0 0 14 16"><g fill="#444"><path d="M6.6 2H12v1.3H6.6z"/><path d="M7.8 2v8.2H6C3.6 10.2 2 8.4 2 6.1S3.6 2 6 2z"/><rect x="7.6" y="2" width="1.3" height="12.2"/><rect x="10.2" y="2" width="1.3" height="12.2"/></g></svg>
<div class="a" style="left:453px;top:69.3px;width:1px;height:87.7px;background:#c8c6c4;"></div>
<svg class="a" style="left:466px;top:72px;" width="36" height="34" viewBox="0 0 36 34"><g fill="none"><path d="M3.6 26.4L13.4 3.4L21 21.4M7.6 18.9h12" stroke="#3b3b3b" stroke-width="1.6" stroke-linejoin="miter"/><path d="M31.6 11c.9.6 1 1.5.4 2.3L21.6 24.2l-2-1.6L30 11.300c.5-.6 1.100-.7 1.600-.3z" fill="#fff" stroke="#555" stroke-width="1.1"/><path d="M18.600 23c1.700-.3 3.200.9 3.200 2.600c0 2.400-2.200 4.400-5.400 4.600c-2.300.1-4.300-.5-6-1.800c2.200-.2 3.400-.9 4.200-2.400c.8-1.700 2.100-2.800 4-3z" fill="#7ab8ee" stroke="#1e7fd6" stroke-width=".9"/></g></svg>
<div class="t" style="left:467.50px;top:108.00px;font-size:11.60px;color:#444;transform:scaleX(0.9828);">Styles</div>
<svg class="a" style="left:478.6px;top:126.4px;" width="8" height="6" viewBox="0 0 8 6"><path d="M1.3 1.5h5.4L4 4.5z" fill="#606060"/></svg>
<div class="t" style="left:459.45px;top:148.00px;font-size:10.80px;color:#444;transform:scaleX(0.9885);">Styles</div>
<svg class="a" style="left:500px;top:150px;" width="9" height="9" viewBox="0 0 9 9"><g fill="none" stroke="#5a5a5a" stroke-width="1.1"><path d="M0.900 6.400V1.200H6.300"/><path d="M3.300 3.600l3.200 3.200"/><path d="M7.700 3.900v3.900H3.800z" fill="#5a5a5a" stroke="none"/></g></svg>
<div class="a" style="left:511px;top:69.3px;width:1px;height:87.7px;background:#c8c6c4;"></div>
<div class="a" style="left:523px;top:69.2px;width:30px;height:29.6px;background:#fbfbfb;border:1px solid #cfcdcb;"></div>
<svg class="a" style="left:528px;top:74px;" width="21" height="21" viewBox="0 0 21 21"><g fill="none" stroke="#444" stroke-width="1.3"><circle cx="13.25" cy="7.5" r="5.1"/><path d="M9.5 11.3L3.9 16.9"/></g></svg>
<div class="t" style="left:519.90px;top:106.00px;font-size:11.60px;color:#444;transform:scaleX(1.0444);">Editing</div>
<svg class="a" style="left:534.2px;top:124.6px;" width="8" height="6" viewBox="0 0 8 6"><path d="M1.3 1.5h5.4L4 4.5z" fill="#606060"/></svg>
<div class="a" style="left:565px;top:69.3px;width:1px;height:87.7px;background:#c8c6c4;"></div>
<svg class="a" style="left:582px;top:70px;" width="25" height="32" viewBox="0 0 25 32"><g><rect x="6.200" y="3.400" width="12.500" height="21.300" rx="2.600" fill="#7ab8ee" stroke="#1e74c8" stroke-width="1.300"/><path d="M3.400 17v4.400a6.300 6.300 0 0 0 6.300 6.300h5.500a6.300 6.300 0 0 0 6.300 -6.300V17" fill="none" stroke="#4a4a4a" stroke-width="1.200"/><path d="M12.450 27.800v2.500M8 30.400h9" stroke="#4a4a4a" stroke-width="1.200"/></g></svg>
<div class="t" style="left:575.50px;top:108.00px;font-size:11.60px;color:#444;transform:scaleX(1.0538);">Dictate</div>
<svg class="a" style="left:590.2px;top:126.5px;" width="8" height="6" viewBox="0 0 8 6"><path d="M1.3 1.5h5.4L4 4.5z" fill="#606060"/></svg>
<div class="t" style="left:580.95px;top:148.00px;font-size:10.80px;color:#444;transform:scaleX(1.0209);">Voice</div>
<div class="a" style="left:623px;top:69.3px;width:1px;height:87.7px;background:#c8c6c4;"></div>
<svg class="a" style="left:779px;top:148.2px;" width="11" height="9" viewBox="0 0 11 9"><path d="M1.4 7.2L5.5 3L9.6 7.2" fill="none" stroke="#666" stroke-width="1.8"/></svg>
<div class="a" style="left:292px;top:140px;width:174px;height:245px;background:#fdf8f4;border:4px solid #e8883a;box-shadow:1px 2px 4px rgba(0,0,0,.26);"></div>
<div class="a" style="left:296px;top:144px;width:166px;height:20.5px;background:#ebe6e3;"></div>
<div class="t" style="left:301.99px;top:149.00px;font-size:11.90px;color:#6e6a68;font-weight:bold;transform:scaleX(0.9650);">Theme Colors</div>
<div class="a" style="left:296.9px;top:167.9px;width:11.3px;height:11.3px;background:#fdfaf7;box-shadow:0 0 0 0.6px rgba(120,110,100,.28);"></div>
<div class="a" style="left:296.9px;top:185.7px;width:11.3px;height:12.75px;background:#edeae7;"></div>
<div class="a" style="left:296.9px;top:198.4px;width:11.3px;height:12.75px;background:#d8d5d1;"></div>
<div class="a" style="left:296.9px;top:211.1px;width:11.3px;height:12.75px;background:#bdbab6;"></div>
<div class="a" style="left:296.9px;top:223.8px;width:11.3px;height:12.75px;background:#a5a29e;"></div>
<div class="a" style="left:296.9px;top:236.5px;width:11.3px;height:12.75px;background:#7f7c78;"></div>
<div class="a" style="left:296.9px;top:185.7px;width:11.3px;height:63.5px;background:transparent;box-shadow:0 0 0 0.6px rgba(120,110,100,.22);"></div>
<div class="a" style="left:313.9px;top:167.9px;width:11.3px;height:11.3px;background:#0d0d0d;box-shadow:0 0 0 0.6px rgba(120,110,100,.28);"></div>
<div class="a" style="left:313.9px;top:185.7px;width:11.3px;height:12.75px;background:#7d7a76;"></div>
<div class="a" style="left:313.9px;top:198.4px;width:11.3px;height:12.75px;background:#5d5a56;"></div>
<div class="a" style="left:313.9px;top:211.1px;width:11.3px;height:12.75px;background:#433f3b;"></div>
<div class="a" style="left:313.9px;top:223.8px;width:11.3px;height:12.75px;background:#2b2723;"></div>
<div class="a" style="left:313.9px;top:236.5px;width:11.3px;height:12.75px;background:#17140f;"></div>
<div class="a" style="left:313.9px;top:185.7px;width:11.3px;height:63.5px;background:transparent;box-shadow:0 0 0 0.6px rgba(120,110,100,.22);"></div>
<div class="a" style="left:330.9px;top:167.9px;width:11.3px;height:11.3px;background:#adc6ef;box-shadow:0 0 0 0.6px rgba(120,110,100,.28);"></div>
<div class="a" style="left:330.9px;top:185.7px;width:11.3px;height:12.75px;background:#85aeed;"></div>
<div class="a" style="left:330.9px;top:198.4px;width:11.3px;height:12.75px;background:#4e8ae6;"></div>
<div class="a" style="left:330.9px;top:211.1px;width:11.3px;height:12.75px;background:#1d56bb;"></div>
<div class="a" style="left:330.9px;top:223.8px;width:11.3px;height:12.75px;background:#15305f;"></div>
<div class="a" style="left:330.9px;top:236.5px;width:11.3px;height:12.75px;background:#0b1526;"></div>
<div class="a" style="left:330.9px;top:185.7px;width:11.3px;height:63.5px;background:transparent;box-shadow:0 0 0 0.6px rgba(120,110,100,.22);"></div>
<div class="a" style="left:347.9px;top:167.9px;width:11.3px;height:11.3px;background:#2a2b55;box-shadow:0 0 0 0.6px rgba(120,110,100,.28);"></div>
<div class="a" style="left:347.9px;top:185.7px;width:11.3px;height:12.75px;background:#c6c5e0;"></div>
<div class="a" style="left:347.9px;top:198.4px;width:11.3px;height:12.75px;background:#9492c6;"></div>
<div class="a" style="left:347.9px;top:211.1px;width:11.3px;height:12.75px;background:#6362af;"></div>
<div class="a" style="left:347.9px;top:223.8px;width:11.3px;height:12.75px;background:#23223f;"></div>
<div class="a" style="left:347.9px;top:236.5px;width:11.3px;height:12.75px;background:#1a1928;"></div>
<div class="a" style="left:347.9px;top:185.7px;width:11.3px;height:63.5px;background:transparent;box-shadow:0 0 0 0.6px rgba(120,110,100,.22);"></div>
<div class="a" style="left:364.9px;top:167.9px;width:11.3px;height:11.3px;background:#4c63a8;box-shadow:0 0 0 0.6px rgba(120,110,100,.28);"></div>
<div class="a" style="left:364.9px;top:185.7px;width:11.3px;height:12.75px;background:#dadbe8;"></div>
<div class="a" style="left:364.9px;top:198.4px;width:11.3px;height:12.75px;background:#b5b9d8;"></div>
<div class="a" style="left:364.9px;top:211.1px;width:11.3px;height:12.75px;background:#909bc8;"></div>
<div class="a" style="left:364.9px;top:223.8px;width:11.3px;height:12.75px;background:#3d4a7c;"></div>
<div class="a" style="left:364.9px;top:236.5px;width:11.3px;height:12.75px;background:#2a3354;"></div>
<div class="a" style="left:364.9px;top:185.7px;width:11.3px;height:63.5px;background:transparent;box-shadow:0 0 0 0.6px rgba(120,110,100,.22);"></div>
<div class="a" style="left:381.9px;top:167.9px;width:11.3px;height:11.3px;background:#6297cc;box-shadow:0 0 0 0.6px rgba(120,110,100,.28);"></div>
<div class="a" style="left:381.9px;top:185.7px;width:11.3px;height:12.75px;background:#dde6ee;"></div>
<div class="a" style="left:381.9px;top:198.4px;width:11.3px;height:12.75px;background:#c0d3e6;"></div>
<div class="a" style="left:381.9px;top:211.1px;width:11.3px;height:12.75px;background:#a0c0dd;"></div>
<div class="a" style="left:381.9px;top:223.8px;width:11.3px;height:12.75px;background:#3a77ae;"></div>
<div class="a" style="left:381.9px;top:236.5px;width:11.3px;height:12.75px;background:#274f73;"></div>
<div class="a" style="left:381.9px;top:185.7px;width:11.3px;height:63.5px;background:transparent;box-shadow:0 0 0 0.6px rgba(120,110,100,.22);"></div>
<div class="a" style="left:398.9px;top:167.9px;width:11.3px;height:11.3px;background:#2e7bd1;box-shadow:0 0 0 0.6px rgba(120,110,100,.28);"></div>
<div class="a" style="left:398.9px;top:185.7px;width:11.3px;height:12.75px;background:#d3e0ee;"></div>
<div class="a" style="left:398.9px;top:198.4px;width:11.3px;height:12.75px;background:#a9c5e6;"></div>
<div class="a" style="left:398.9px;top:211.1px;width:11.3px;height:12.75px;background:#80abde;"></div>
<div class="a" style="left:398.9px;top:223.8px;width:11.3px;height:12.75px;background:#245f9e;"></div>
<div class="a" style="left:398.9px;top:236.5px;width:11.3px;height:12.75px;background:#1a406a;"></div>
<div class="a" style="left:398.9px;top:185.7px;width:11.3px;height:63.5px;background:transparent;box-shadow:0 0 0 0.6px rgba(120,110,100,.22);"></div>
<div class="a" style="left:415.9px;top:167.9px;width:11.3px;height:11.3px;background:#7f8aa2;box-shadow:0 0 0 0.6px rgba(120,110,100,.28);"></div>
<div class="a" style="left:415.9px;top:185.7px;width:11.3px;height:12.75px;background:#e0e1e5;"></div>
<div class="a" style="left:415.9px;top:198.4px;width:11.3px;height:12.75px;background:#caccd4;"></div>
<div class="a" style="left:415.9px;top:211.1px;width:11.3px;height:12.75px;background:#b0b5c2;"></div>
<div class="a" style="left:415.9px;top:223.8px;width:11.3px;height:12.75px;background:#5b657c;"></div>
<div class="a" style="left:415.9px;top:236.5px;width:11.3px;height:12.75px;background:#414654;"></div>
<div class="a" style="left:415.9px;top:185.7px;width:11.3px;height:63.5px;background:transparent;box-shadow:0 0 0 0.6px rgba(120,110,100,.22);"></div>
<div class="a" style="left:432.9px;top:167.9px;width:11.3px;height:11.3px;background:#5ea0a6;box-shadow:0 0 0 0.6px rgba(120,110,100,.28);"></div>
<div class="a" style="left:432.9px;top:185.7px;width:11.3px;height:12.75px;background:#dde7e7;"></div>
<div class="a" style="left:432.9px;top:198.4px;width:11.3px;height:12.75px;background:#bdd5d6;"></div>
<div class="a" style="left:432.9px;top:211.1px;width:11.3px;height:12.75px;background:#9dc3c5;"></div>
<div class="a" style="left:432.9px;top:223.8px;width:11.3px;height:12.75px;background:#4a7f80;"></div>
<div class="a" style="left:432.9px;top:236.5px;width:11.3px;height:12.75px;background:#345555;"></div>
<div class="a" style="left:432.9px;top:185.7px;width:11.3px;height:63.5px;background:transparent;box-shadow:0 0 0 0.6px rgba(120,110,100,.22);"></div>
<div class="a" style="left:449.9px;top:167.9px;width:11.3px;height:11.3px;background:#9d8b99;box-shadow:0 0 0 0.6px rgba(120,110,100,.28);"></div>
<div class="a" style="left:449.9px;top:185.7px;width:11.3px;height:12.75px;background:#e9e4e6;"></div>
<div class="a" style="left:449.9px;top:198.4px;width:11.3px;height:12.75px;background:#d6cccf;"></div>
<div class="a" style="left:449.9px;top:211.1px;width:11.3px;height:12.75px;background:#c3b5bc;"></div>
<div class="a" style="left:449.9px;top:223.8px;width:11.3px;height:12.75px;background:#7a6674;"></div>
<div class="a" style="left:449.9px;top:236.5px;width:11.3px;height:12.75px;background:#54464f;"></div>
<div class="a" style="left:449.9px;top:185.7px;width:11.3px;height:63.5px;background:transparent;box-shadow:0 0 0 0.6px rgba(120,110,100,.22);"></div>
<div class="a" style="left:296px;top:253px;width:166px;height:22.6px;background:#ebe6e3;"></div>
<div class="t" style="left:302.39px;top:260.00px;font-size:11.90px;color:#6e6a68;font-weight:bold;transform:scaleX(0.9428);">Standard Colors</div>
<div class="a" style="left:296.9px;top:279.2px;width:11.3px;height:11.2px;background:#c00000;box-shadow:0 0 0 0.6px rgba(120,110,100,.25);"></div>
<div class="a" style="left:313.9px;top:279.2px;width:11.3px;height:11.2px;background:#ff0000;box-shadow:0 0 0 0.6px rgba(120,110,100,.25);"></div>
<div class="a" style="left:330.9px;top:279.2px;width:11.3px;height:11.2px;background:#ffc000;box-shadow:0 0 0 0.6px rgba(120,110,100,.25);"></div>
<div class="a" style="left:347.9px;top:279.2px;width:11.3px;height:11.2px;background:#ffff00;box-shadow:0 0 0 0.6px rgba(120,110,100,.25);"></div>
<div class="a" style="left:364.9px;top:279.2px;width:11.3px;height:11.2px;background:#92d050;box-shadow:0 0 0 0.6px rgba(120,110,100,.25);"></div>
<div class="a" style="left:381.9px;top:279.2px;width:11.3px;height:11.2px;background:#00b050;box-shadow:0 0 0 0.6px rgba(120,110,100,.25);"></div>
<div class="a" style="left:398.9px;top:279.2px;width:11.3px;height:11.2px;background:#00b0f0;box-shadow:0 0 0 0.6px rgba(120,110,100,.25);"></div>
<div class="a" style="left:415.9px;top:279.2px;width:11.3px;height:11.2px;background:#0070c0;box-shadow:0 0 0 0.6px rgba(120,110,100,.25);"></div>
<div class="a" style="left:432.9px;top:279.2px;width:11.3px;height:11.2px;background:#002060;box-shadow:0 0 0 0.6px rgba(120,110,100,.25);"></div>
<div class="a" style="left:449.9px;top:279.2px;width:11.3px;height:11.2px;background:#7030a0;box-shadow:0 0 0 0.6px rgba(120,110,100,.25);"></div>
<div class="a" style="left:296px;top:293px;width:166px;height:22.6px;background:#ebe6e3;"></div>
<div class="t" style="left:302.39px;top:300.00px;font-size:11.90px;color:#6e6a68;font-weight:bold;transform:scaleX(0.9578);">Recent Colors</div>
<div class="a" style="left:296.9px;top:318.9px;width:11.3px;height:11.3px;background:#5f8f80;"></div>
<div class="a" style="left:313.9px;top:318.9px;width:11.3px;height:11.3px;background:#83a89b;"></div>
<div class="a" style="left:296.6px;top:335.2px;width:19.2px;height:19.2px;background:#c8c4c0;border:1px solid #9c9a98;box-shadow:inset 0 0 0 1.500px #dedad6;"></div>
<div class="t" style="left:326.36px;top:339.00px;font-size:12.40px;color:#555;transform:scaleX(0.9793);">No Color</div>
<div class="a" style="left:326.8px;top:350.6px;width:8.8px;height:1px;background:#555;"></div>
<div class="a" style="left:296px;top:357.2px;width:166px;height:1px;background:#dcd7d2;"></div>
<svg class="a" style="left:297px;top:362px;" width="18" height="17" viewBox="0 0 18 17"><g><path d="M9 1.8c4.2 0 7.2 2.6 7.2 5.8c0 2.4-1.8 3.6-3.8 3.6c-1.4 0-2 .6-2 1.4c0 .8.6 1.2.6 2c0 .8-.8 1.2-2 1.2c-4.2 0-7-3-7-7c0-4 3-7 7-7z" fill="#fff" stroke="#555" stroke-width="1.2"/><circle cx="5.4" cy="6.2" r="1.2" fill="#3a8f4c"/><circle cx="8.8" cy="4.4" r="1.2" fill="#e0a020"/><circle cx="12.4" cy="6" r="1.2" fill="#d03030"/><circle cx="4.8" cy="10" r="1.2" fill="#2a6fd0"/><circle cx="7" cy="13" r="1.2" fill="#8a3fb0"/></g></svg>
<div class="t" style="left:326.36px;top:365.00px;font-size:12.40px;color:#555;transform:scaleX(0.9532);">More Colors...</div>
<div class="a" style="left:326.8px;top:376.5px;width:10.6px;height:1px;background:#555;"></div>
<svg class="a" style="left:122.1px;top:260px;" width="51.8" height="65.2" viewBox="0 0 51.8 65.2"><defs><filter id="s1" x="-30%" y="-30%" width="170%" height="170%"><feDropShadow dx="1.5" dy="2" stdDeviation="1.6" flood-color="#000" flood-opacity=".35"/></filter></defs><g filter="url(#s1)" fill="#e8883a"><circle cx="24.90" cy="24.90" r="18.90"/><path d="M18.74 42.77L25.00 57.20L31.17 42.73z"/></g></svg>
<svg class="a" style="left:141px;top:276.9px;" width="12" height="20" viewBox="0 0 12 20"><path d="M10.400 1.200v16.900H6.600V5.700L2.600 7.300L1.900 4.300L7.400 1.200z" fill="#fff"/></svg>
<svg class="a" style="left:294.05px;top:61.7px;" width="52" height="64.9" viewBox="0 0 52 64.9"><defs><filter id="s2" x="-30%" y="-30%" width="170%" height="170%"><feDropShadow dx="1.5" dy="2" stdDeviation="1.6" flood-color="#000" flood-opacity=".35"/></filter></defs><g filter="url(#s2)" fill="#e8883a"><circle cx="25.00" cy="25.00" r="19.00"/><path d="M18.78 42.95L25.05 56.90L31.27 42.93z"/></g></svg>
<div class="t" style="left:312.22px;top:78.00px;font-size:23.60px;color:#fff;font-weight:bold;transform:scaleX(1.0400);">2</div>
<svg class="a" style="left:462.6px;top:237.2px;" width="65.8" height="51.6" viewBox="0 0 65.8 51.6"><defs><filter id="s3" x="-30%" y="-30%" width="170%" height="170%"><feDropShadow dx="1.5" dy="2" stdDeviation="1.6" flood-color="#000" flood-opacity=".35"/></filter></defs><g filter="url(#s3)" fill="#e8883a"><circle cx="39.00" cy="24.80" r="18.80"/><path d="M21.25 18.62L6.00 24.80L21.25 30.98z"/></g></svg>
<div class="t" style="left:494.77px;top:253.00px;font-size:23.60px;color:#fff;font-weight:bold;transform:scaleX(1.0400);">3</div>
</body></html>
